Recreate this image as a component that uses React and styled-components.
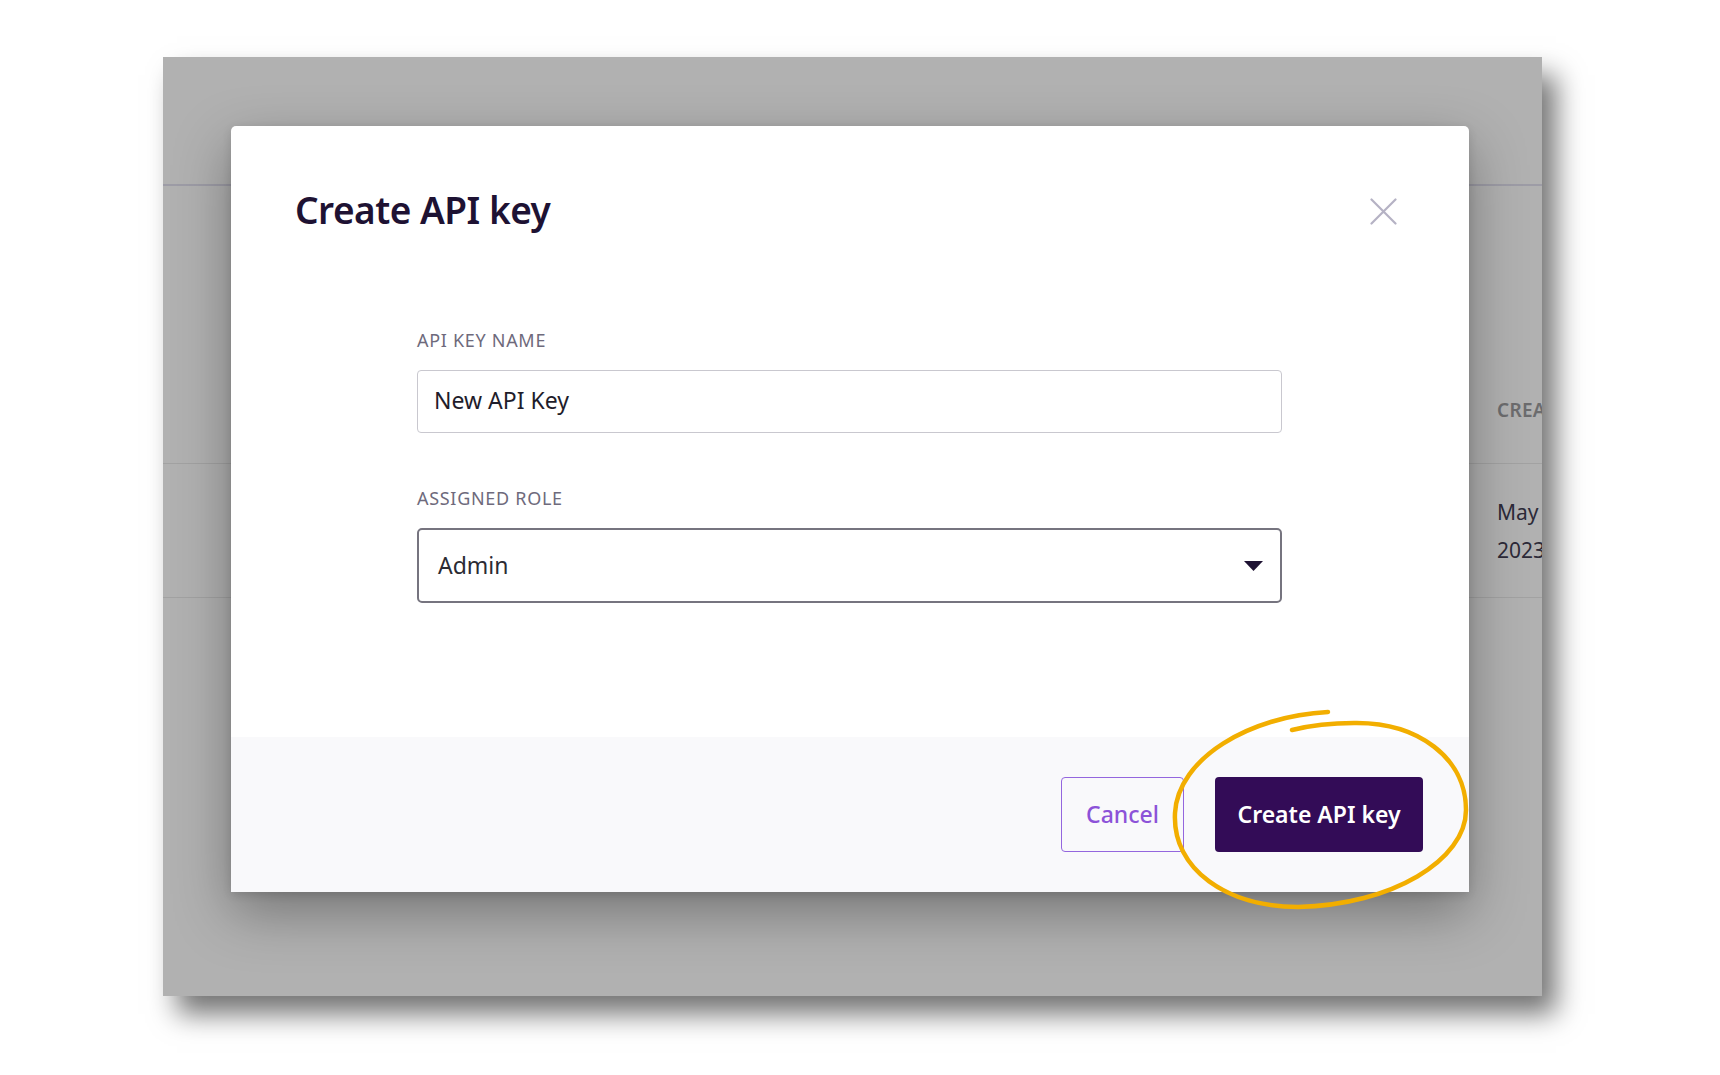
import React from "react";
import styled, { createGlobalStyle } from "styled-components";

const GlobalStyle = createGlobalStyle`
  html, body {
    margin: 0;
    padding: 0;
    background: #ffffff;
  }
  * {
    box-sizing: border-box;
  }
`;

const Stage = styled.div`
  position: relative;
  width: 1720px;
  height: 1075px;
  overflow: hidden;
  padding: 57px 0 0 163px;
  font-family: "Noto Sans", "Open Sans", sans-serif;
`;

// the dimmed page behind the dialog
const Frame = styled.div`
  position: relative;
  width: 1379px;
  height: 939px;
  background: #b1b1b1;
  box-shadow: 14px 18px 26px rgba(0, 0, 0, 0.55);
  overflow: hidden;
`;

const PageHeader = styled.div`
  height: 129px;
  border-bottom: 2px solid #9d9ca6;
`;

const Table = styled.div`
  padding-top: 171px;
`;

const TableRow = styled.div`
  display: grid;
  grid-template-columns: 1334px 1fr;
  align-items: center;
  height: ${({ head }) => (head ? "107px" : "134px")};
  border-bottom: 1px solid #a2a2a2;
`;

const HeadCell = styled.div`
  font-size: 19px;
  font-weight: 600;
  color: #6c6c6e;
  letter-spacing: 0.3px;
  white-space: nowrap;
`;

const Cell = styled.div`
  font-size: 21px;
  line-height: 38px;
  color: #2c2a38;
  white-space: nowrap;
`;

const Modal = styled.div`
  position: absolute;
  left: 68px;
  top: 69px;
  width: 1238px;
  height: 766px;
  display: flex;
  flex-direction: column;
  background: #ffffff;
  border-radius: 5px 5px 0 0;
  box-shadow: 0 20px 55px rgba(0, 0, 0, 0.34), 0 3px 10px rgba(0, 0, 0, 0.12);
  overflow: hidden;
`;

const ModalBody = styled.div`
  flex: 1;
  padding: 61px 72px 0 64px;
`;

const ModalHeader = styled.div`
  display: flex;
  justify-content: space-between;
  align-items: center;
  height: 46px;
`;

const Title = styled.h2`
  margin: 0;
  font-size: 37px;
  line-height: 46px;
  font-weight: 600;
  color: #1e1233;
  letter-spacing: -0.5px;
`;

const CloseButton = styled.button`
  display: flex;
  padding: 0;
  border: none;
  background: none;
  margin-top: 2px;
`;

const Form = styled.div`
  width: 865px;
  margin: 95px 0 0 122px;
  display: flex;
  flex-direction: column;
  gap: 53px;
`;

const Field = styled.div`
  display: flex;
  flex-direction: column;
  gap: 18px;
`;

const Label = styled.label`
  font-size: 18px;
  line-height: 24px;
  letter-spacing: 0.7px;
  color: #6e6a7c;
  text-transform: uppercase;
`;

const Input = styled.input`
  height: 63px;
  padding: 0 16px 3px;
  border: 1.5px solid #c9c8cf;
  border-radius: 4px;
  font-family: inherit;
  font-size: 23px;
  color: #1f1d2b;
  outline: none;
`;

const SelectBox = styled.div`
  height: 75px;
  display: flex;
  align-items: center;
  justify-content: space-between;
  padding: 0 17px 2px 19px;
  border: 2px solid #76747f;
  border-radius: 5px;
  font-size: 23px;
  color: #2b2b33;
`;

const Caret = styled.svg`
  margin-top: 2px;
`;

const Footer = styled.div`
  height: 155px;
  background: #f9f9fb;
  display: flex;
  justify-content: flex-end;
  align-items: center;
  gap: 31px;
  padding: 0 46px;
`;

const Button = styled.button`
  height: 75px;
  width: ${({ wide }) => (wide ? "208px" : "123px")};
  border-radius: 4px;
  font-family: inherit;
  font-size: 23px;
  font-weight: ${({ primary }) => (primary ? 600 : 500)};
  color: ${({ primary }) => (primary ? "#ffffff" : "#8c52d8")};
  background: ${({ primary }) => (primary ? "#330c57" : "transparent")};
  border: ${({ primary }) => (primary ? "none" : "1.5px solid #9466de")};
  padding: 0 0 2px;
`;

const Annotation = styled.svg`
  position: absolute;
  left: 0;
  top: 0;
  pointer-events: none;
`;

export default function App() {
  return (
    <>
      <GlobalStyle />
      <Stage>
        <Frame>
          <PageHeader />
          <Table>
            <TableRow head>
              <div />
              <HeadCell>CREATED</HeadCell>
            </TableRow>
            <TableRow>
              <div />
              <Cell>
                May 12,
                <br />
                2023
              </Cell>
            </TableRow>
          </Table>

          <Modal>
            <ModalBody>
              <ModalHeader>
                <Title>Create API key</Title>
                <CloseButton aria-label="Close">
                  <svg width="27" height="27" viewBox="0 0 27 27">
                    <path
                      d="M1.5 1.5 L25.5 25.5 M25.5 1.5 L1.5 25.5"
                      stroke="#b5b2c4"
                      strokeWidth="2.2"
                      strokeLinecap="round"
                    />
                  </svg>
                </CloseButton>
              </ModalHeader>
              <Form>
                <Field>
                  <Label>API Key Name</Label>
                  <Input defaultValue="New API Key" />
                </Field>
                <Field>
                  <Label>Assigned Role</Label>
                  <SelectBox>
                    <span>Admin</span>
                    <Caret width="19" height="10" viewBox="0 0 19 10">
                      <polygon points="0,0 19,0 9.5,10" fill="#1e1233" />
                    </Caret>
                  </SelectBox>
                </Field>
              </Form>
            </ModalBody>
            <Footer>
              <Button>Cancel</Button>
              <Button primary wide>
                Create API key
              </Button>
            </Footer>
          </Modal>
        </Frame>

        <Annotation width="1720" height="1075" viewBox="0 0 1720 1075">
          <path
            d="M1328 712 C1250 716 1178 758 1175 813 C1172 870 1228 907 1298 907 C1392 905 1466 860 1466 810 C1466 758 1418 722 1354 723 C1330 723 1308 726 1292 730"
            fill="none"
            stroke="#f2ae00"
            strokeWidth="4.5"
            strokeLinecap="round"
          />
        </Annotation>
      </Stage>
    </>
  );
}
